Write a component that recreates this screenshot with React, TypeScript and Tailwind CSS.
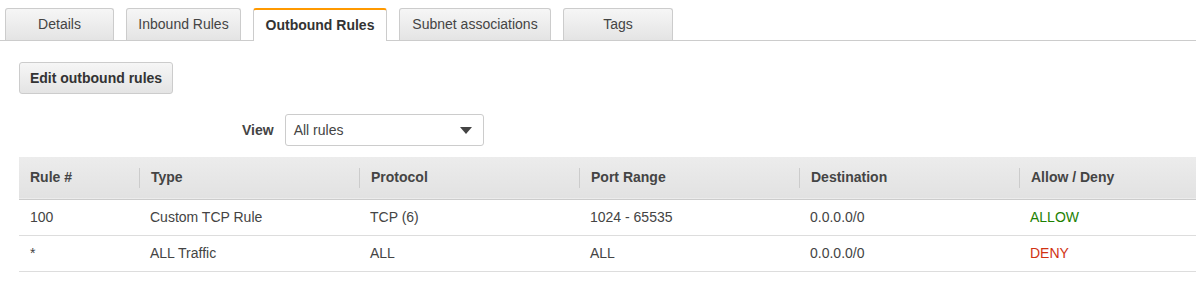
import React from "react";

const tabs = [
  { label: "Details", w: "w-[109px]" },
  { label: "Inbound Rules", w: "w-[115px]" },
  { label: "Outbound Rules", w: "w-[134px]", active: true },
  { label: "Subnet associations", w: "w-[152px]" },
  { label: "Tags", w: "w-[110px]" },
];

const rows = [
  { rule: "100", type: "Custom TCP Rule", protocol: "TCP (6)", port: "1024 - 65535", dest: "0.0.0.0/0", action: "ALLOW" },
  { rule: "*", type: "ALL Traffic", protocol: "ALL", port: "ALL", dest: "0.0.0.0/0", action: "DENY" },
];

const headers = ["Type", "Protocol", "Port Range", "Destination", "Allow / Deny"];

export default function App() {
  return (
    <div className="h-[294px] w-[1196px] bg-white font-['Liberation_Sans',Arial,sans-serif] text-[14px] text-[#444]">
      {/* tab strip */}
      <div className="flex items-end gap-3 border-b border-[#ccc] pl-[5px] pt-2">
        {tabs.map((t) =>
          t.active ? (
            <div
              key={t.label}
              className={`${t.w} -mb-px flex h-[33px] items-center justify-center rounded-t-[3px] border-x border-t-2 border-x-[#ccc] border-t-[#f90] bg-white font-bold text-[#333]`}
            >
              {t.label}
            </div>
          ) : (
            <div
              key={t.label}
              className={`${t.w} flex h-[32px] items-center justify-center rounded-t-[3px] border-x border-t border-[#ccc] bg-gradient-to-b from-[#f6f6f6] to-[#e4e4e4] text-[#444]`}
            >
              {t.label}
            </div>
          )
        )}
      </div>

      <div className="pl-[19px]">
        <button className="mt-[21px] h-[32px] w-[154px] rounded-[3px] border border-[#ccc] bg-gradient-to-b from-[#f6f6f6] to-[#e4e4e4] text-[14px] font-bold text-[#333]">
          Edit outbound rules
        </button>

        <div className="mt-[20px] flex items-center pl-[223px]">
          <span className="mr-[11px] font-bold text-[#444]">View</span>
          <div className="flex h-[32px] w-[199px] items-center justify-between rounded-[3px] border border-[#ccc] bg-white pl-2 pr-[11px] text-[#444]">
            <span>All rules</span>
            <svg width="12" height="7" viewBox="0 0 12 7">
              <path d="M0 0h12L6 7z" fill="#444" />
            </svg>
          </div>
        </div>

        <table className="mt-[11px] w-[1177px] table-fixed border-collapse">
          <colgroup>
            <col className="w-[120px]" />
            <col className="w-[220px]" />
            <col className="w-[220px]" />
            <col className="w-[220px]" />
            <col className="w-[220px]" />
            <col />
          </colgroup>
          <thead>
            <tr className="h-[42px] border-b border-[#ccc] bg-gradient-to-b from-[#ececec] to-[#e2e2e2]">
              <th className="pl-[11px] text-left font-bold text-[#444]">Rule #</th>
              {headers.map((h) => (
                <th key={h} className="p-0 text-left font-bold text-[#444]">
                  <div className="flex items-center">
                    <span className="h-[20px] w-px bg-[#ccc]" />
                    <span className="pl-[11px]">{h}</span>
                  </div>
                </th>
              ))}
            </tr>
          </thead>
          <tbody>
            {rows.map((r) => (
              <tr key={r.rule} className="h-[36px] border-b border-[#ddd]">
                <td className="pl-[11px]">{r.rule}</td>
                <td className="pl-[11px]">{r.type}</td>
                <td className="pl-[11px]">{r.protocol}</td>
                <td className="pl-[11px]">{r.port}</td>
                <td className="pl-[11px]">{r.dest}</td>
                <td className={r.action === "ALLOW" ? "pl-[11px] text-[#1d8102]" : "pl-[11px] text-[#d13212]"}>
                  {r.action}
                </td>
              </tr>
            ))}
          </tbody>
        </table>
      </div>
    </div>
  );
}
